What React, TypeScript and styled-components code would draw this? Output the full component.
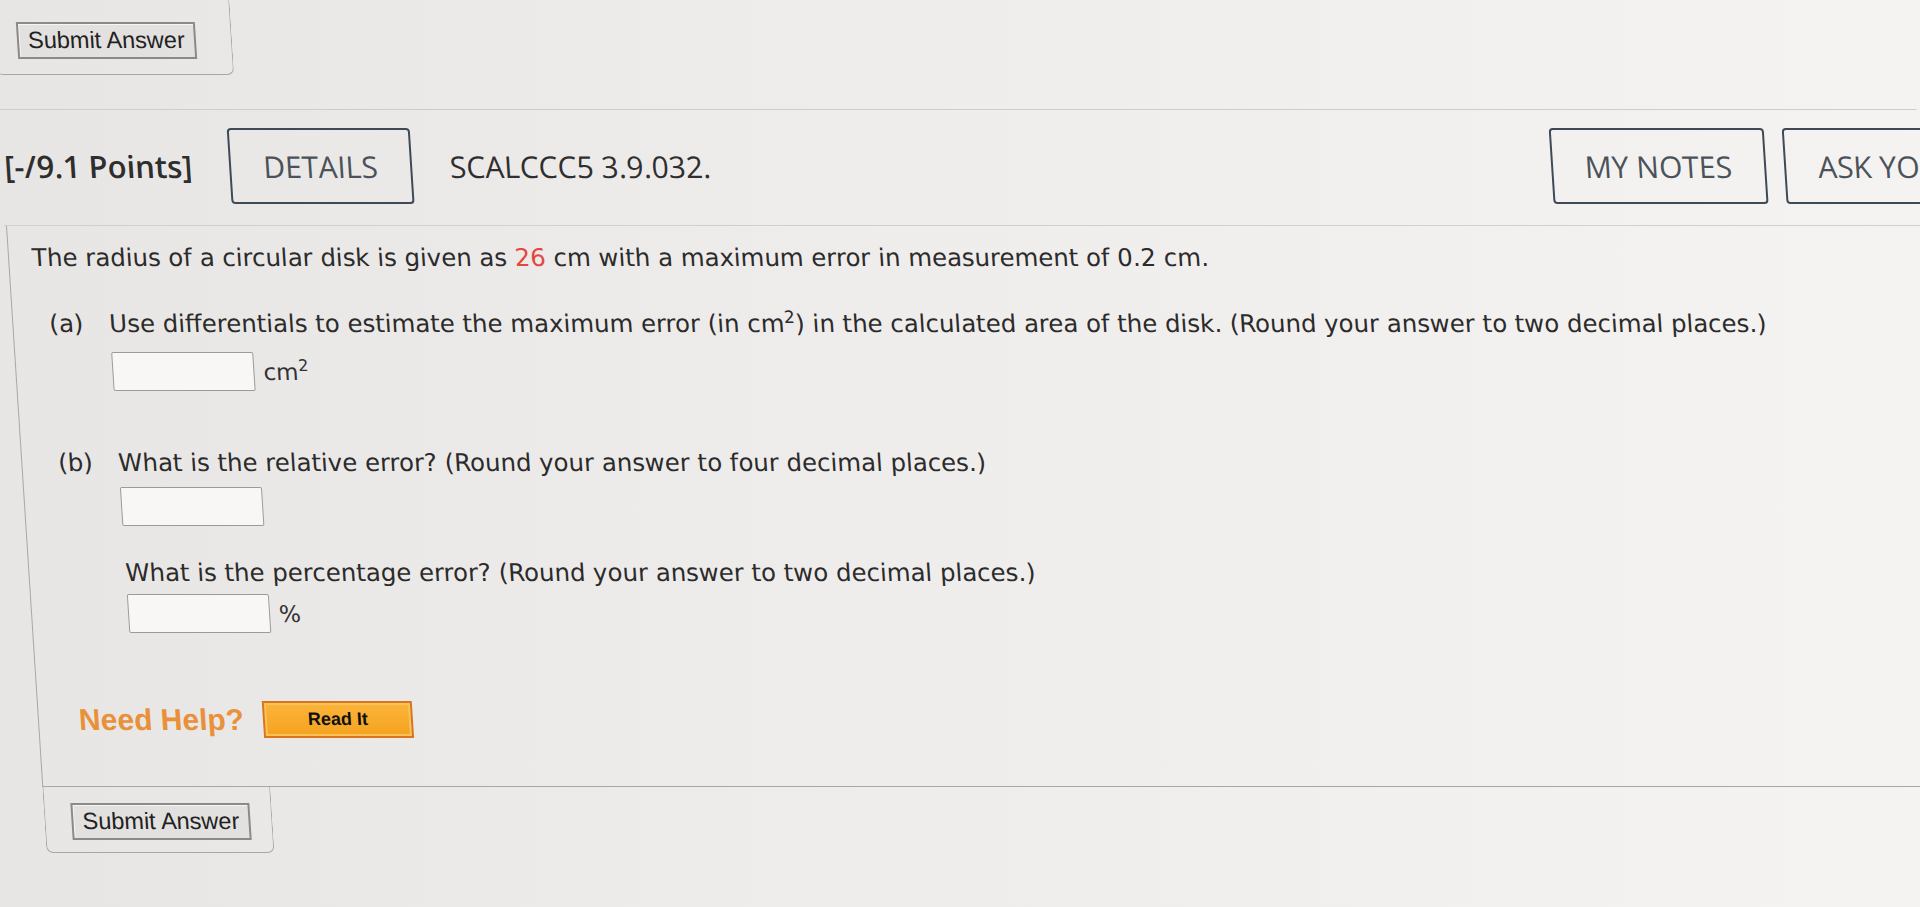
import styled, { createGlobalStyle } from "styled-components"

const GlobalStyle = createGlobalStyle`
    html, body {
        margin: 0;
        padding: 0;
        overflow: hidden;
        background: #ebe9e8;
    }
`

const Colors = {
    Text: "#2b2b2b",
    Line: "#a9a7a6",
    LightLine: "#d2d0cf",
    Slate: "#3e4a56",
    SlateText: "#4b525a",
    Red: "#e4473e",
    Orange: "#e8913a",
}

function SubmitTab({ top }: { top?: boolean }) {
    return (
        <Tab $top={top}>
            <SubmitButton>Submit Answer</SubmitButton>
        </Tab>
    )
}

function AnswerBox({ unit, mt }: { unit?: React.ReactNode; mt: number }) {
    return (
        <AnswerRow $mt={mt}>
            <Input type="text" />
            {unit && <Unit>{unit}</Unit>}
        </AnswerRow>
    )
}

export default function App() {
    return (
        <>
            <GlobalStyle />
            <Page>
                <Sheet>
                    <SubmitTab top />

                    <Question>
                        <Header>
                            <Points>[-/9.1 Points]</Points>
                            <OutlineButton $ml={37}>DETAILS</OutlineButton>
                            <Code>SCALCCC5 3.9.032.</Code>
                            <RightGroup>
                                <OutlineButton>MY NOTES</OutlineButton>
                                <OutlineButton $ml={18}>ASK YOUR TEACHER</OutlineButton>
                            </RightGroup>
                        </Header>

                        <Body>
                            <Prompt>
                                The radius of a circular disk is given as <Red>26</Red> cm with a
                                maximum error in measurement of 0.2 cm.
                            </Prompt>

                            <Part $mt={36}>
                                <Label>(a)</Label>
                                <PartContent>
                                    <PartText>
                                        Use differentials to estimate the maximum error (in cm
                                        <Sup>2</Sup>) in the calculated area of the disk. (Round your
                                        answer to two decimal places.)
                                    </PartText>
                                    <AnswerBox
                                        mt={13}
                                        unit={
                                            <>
                                                cm<Sup>2</Sup>
                                            </>
                                        }
                                    />
                                </PartContent>
                            </Part>

                            <Part $mt={57}>
                                <Label>(b)</Label>
                                <PartContent>
                                    <PartText>
                                        What is the relative error? (Round your answer to four
                                        decimal places.)
                                    </PartText>
                                    <AnswerBox mt={9} />
                                    <PartText $mt={32}>
                                        What is the percentage error? (Round your answer to two
                                        decimal places.)
                                    </PartText>
                                    <AnswerBox mt={6} unit="%" />
                                </PartContent>
                            </Part>

                            <HelpRow>
                                <NeedHelp>Need Help?</NeedHelp>
                                <ReadIt>Read It</ReadIt>
                            </HelpRow>
                        </Body>

                        <SubmitTab />
                    </Question>
                </Sheet>
            </Page>
        </>
    )
}

const Page = styled.div`
    width: 1920px;
    height: 907px;
    overflow: hidden;
    background: linear-gradient(90deg, #e8e6e5 0%, #efedec 45%, #f5f3f2 100%);
`

/* the reference is a photo of a screen: its verticals lean a little */
const Sheet = styled.div`
    transform: skewX(3.7deg);
    transform-origin: 0 165px;
`

const Tab = styled.div<{ $top?: boolean }>`
    width: ${(p) => (p.$top ? 214 : 200)}px;
    padding: ${(p) => (p.$top ? "23px 0 15px 22px" : "17px 0 12px 26px")};
    border: 1.5px solid ${Colors.Line};
    border-top: none;
    border-radius: 0 0 7px 7px;
    margin-left: 2px;
    margin-top: -1.5px;
`

const SubmitButton = styled.button`
    height: 37px;
    padding: 0 9px;
    font-family: "Liberation Sans", Arial, sans-serif;
    font-size: 23.5px;
    color: #222;
    background: #e3e1e0;
    border: 2px solid #8c8a89;
    box-shadow: inset 1px 1px 0 #f6f5f4;
    cursor: pointer;
`

const Question = styled.div`
    margin-top: 34px;
    border-top: 1px solid #cfcdcc;
`

const Header = styled.div`
    min-width: 2146px;
    display: flex;
    align-items: center;
    padding: 18px 0 21px 4px;
    border-bottom: 1px solid ${Colors.LightLine};
    font-family: "Open Sans", "Noto Sans", sans-serif;
`

const Points = styled.div`
    font-size: 31px;
    font-weight: 600;
    color: #2e2e2e;
    white-space: nowrap;
`

const OutlineButton = styled.div<{ $ml?: number }>`
    height: 72px;
    padding: 0 32px;
    margin-left: ${(p) => p.$ml ?? 0}px;
    display: flex;
    align-items: center;
    border: 2px solid ${Colors.Slate};
    border-radius: 4px;
    font-size: 30px;
    color: ${Colors.SlateText};
    white-space: nowrap;
    flex-shrink: 0;
    cursor: pointer;
`

const Code = styled.div`
    margin-left: 38px;
    font-size: 30px;
    font-weight: 500;
    color: #2f2f2f;
    white-space: nowrap;
`

const RightGroup = styled.div`
    margin-left: auto;
    padding-right: 20px;
    display: flex;
    align-items: center;
`

const Body = styled.div`
    margin-left: 2px;
    padding: 17px 0 48px 23px;
    border-left: 1.5px solid ${Colors.Line};
    border-bottom: 1.5px solid ${Colors.Line};
    font-family: "DejaVu Sans", Verdana, sans-serif;
    font-size: 24.4px;
    color: ${Colors.Text};
`

const Prompt = styled.p`
    margin: 0;
    line-height: 30px;
`

const Red = styled.span`
    color: ${Colors.Red};
`

const Sup = styled.sup`
    font-size: 0.7em;
    line-height: 0;
`

const Part = styled.div<{ $mt: number }>`
    margin-top: ${(p) => p.$mt}px;
    margin-left: 13px;
    display: grid;
    grid-template-columns: 60px 1fr;
`

const Label = styled.div`
    line-height: 30px;
`

const PartContent = styled.div`
    display: flex;
    flex-direction: column;
    align-items: flex-start;
`

const PartText = styled.p<{ $mt?: number }>`
    margin: ${(p) => p.$mt ?? 0}px 0 0;
    line-height: 30px;
`

const AnswerRow = styled.div<{ $mt: number }>`
    margin-top: ${(p) => p.$mt}px;
    display: flex;
    align-items: center;
    gap: 9px;
`

const Input = styled.input`
    width: 142px;
    height: 39px;
    box-sizing: border-box;
    border: 1.5px solid #9d9b9a;
    border-radius: 2px;
    background: #f8f7f6;
`

const Unit = styled.span`
    font-size: 23px;
    color: #333;
`

const HelpRow = styled.div`
    margin-top: 68px;
    margin-left: 17px;
    display: flex;
    align-items: center;
    gap: 19px;
`

const NeedHelp = styled.div`
    font-family: "Liberation Sans", Arial, sans-serif;
    font-size: 30px;
    font-weight: bold;
    color: ${Colors.Orange};
`

const ReadIt = styled.button`
    width: 150px;
    height: 37px;
    font-family: "Liberation Sans", Arial, sans-serif;
    font-size: 18px;
    font-weight: bold;
    color: #111;
    background: linear-gradient(#fbb53a, #f5a21f);
    border: 2px solid #d9761c;
    box-shadow: inset 0 0 0 2px #fbc25a;
    cursor: pointer;
`
